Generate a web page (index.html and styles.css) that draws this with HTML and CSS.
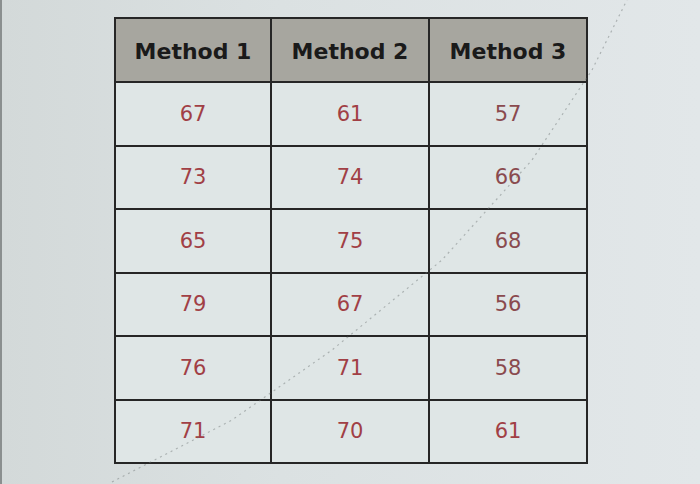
FILE: index.html
```html
<!DOCTYPE html>
<html>
<head>
<meta charset="utf-8">
<link rel="stylesheet" href="styles.css">
</head>
<body>
<div class="screen">
  <table class="data">
    <thead>
      <tr><th class="w1">Method 1</th><th>Method 2</th><th>Method 3</th></tr>
    </thead>
    <tbody>
      <tr><td>67</td><td>61</td><td class="c3">57</td></tr>
      <tr><td>73</td><td>74</td><td class="c3">66</td></tr>
      <tr><td>65</td><td>75</td><td class="c3">68</td></tr>
      <tr><td>79</td><td>67</td><td class="c3">56</td></tr>
      <tr><td>76</td><td>71</td><td class="c3">58</td></tr>
      <tr><td>71</td><td>70</td><td>61</td></tr>
    </tbody>
  </table>
  <svg class="crack" width="700" height="484" viewBox="0 0 700 484">
    <path d="M110 482 L230 420 L330 350 L440 260 L530 160 L590 70 L625 0" fill="none" stroke="#6d7373" stroke-width="1.2" stroke-dasharray="2 4" opacity="0.45"/>
  </svg>
</div>
</body>
</html>
```
FILE: styles.css
```css
html, body {
  margin: 0;
  padding: 0;
}
body {
  width: 700px;
  height: 484px;
  overflow: hidden;
  background: linear-gradient(90deg, #d3d9d9 0%, #dbe1e2 40%, #e2e7e9 100%);
}
.screen {
  position: relative;
  width: 700px;
  height: 484px;
  padding: 17px 0 0 114px;
  box-sizing: border-box;
  border-left: 2px solid #8a8f8f;
}
.data {
  border-collapse: collapse;
  border: 2px solid #1e1e1e;
  margin-left: -2px;
  font-family: "DejaVu Sans", Verdana, sans-serif;
}
.data th, .data td {
  border: 2px solid #262626;
  text-align: center;
  padding: 0;
}
.data th {
  height: 60px;
  background: #a7a69f;
  color: #1a1a1a;
  font-size: 22px;
  font-weight: bold;
  width: 156px;
  padding-top: 2px;
}
.data th.w1 {
  width: 154px;
}
.data td {
  height: 61.5px;
  font-size: 21px;
  color: #a13f45;
  background: #dfe6e6;
}
.data td.c3 {
  color: #8a4a4e;
}
.crack {
  position: absolute;
  left: 0;
  top: 0;
  pointer-events: none;
}
```
